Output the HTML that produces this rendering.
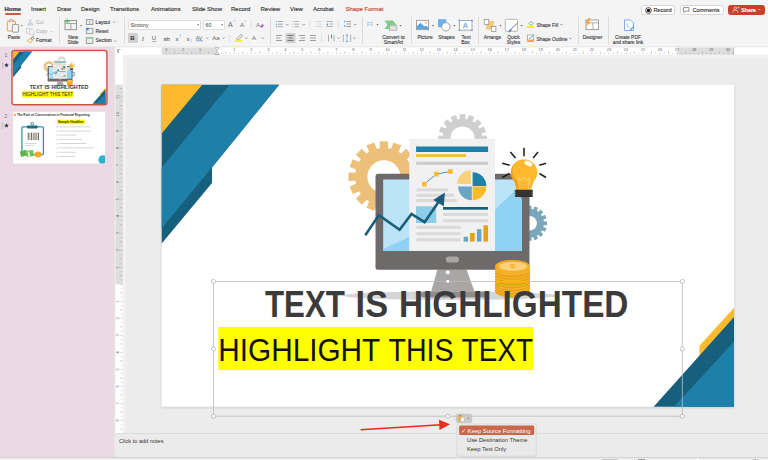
<!DOCTYPE html>
<html><head><meta charset="utf-8">
<style>
*{margin:0;padding:0;box-sizing:border-box}
html,body{width:768px;height:460px;overflow:hidden;background:#ececec;font-family:"Liberation Sans",sans-serif;color:#3a3a3a}
.a{position:absolute;white-space:nowrap}
#ribbon{position:absolute;left:0;top:0;width:768px;height:47px;background:#f4f4f4;border-bottom:1px solid #ebebeb}
.tab{position:absolute;top:5.5px;font-size:6px;color:#333;line-height:7px;-webkit-text-stroke-width:0.15px}
.lbl{position:absolute;width:50px;font-size:4.9px;line-height:5px;color:#3a3a3a;text-align:center;white-space:nowrap;-webkit-text-stroke-width:0.12px}
.sm{position:absolute;font-size:4.9px;line-height:6px;color:#3a3a3a;white-space:nowrap;-webkit-text-stroke-width:0.12px}
.sep{position:absolute;top:17px;width:1px;height:27px;background:#dcdcdc}
#pane{position:absolute;left:0;top:47px;width:114px;height:410px;background:#ebdae5}
#vsep{position:absolute;left:113.7px;top:47px;width:1.8px;height:410px;background:#e6e6e6}
#hruler{position:absolute;left:122px;top:47.5px;width:646px;height:7px;background:#fff}
#vruler{position:absolute;left:115.5px;top:54.5px;width:7px;height:379px;background:#fff}
#corner{position:absolute;left:115.5px;top:47.5px;width:7px;height:7px;background:#fff}
#band1{position:absolute;left:122.5px;top:54.5px;width:646px;height:3.5px;background:#f1f1f1}
#band2{position:absolute;left:122.5px;top:54.5px;width:3.5px;height:379px;background:#f1f1f1}
#notes{position:absolute;left:115.5px;top:433.4px;width:653px;height:23.5px;background:#ebebeb;border-top:1px solid #dcdcdc}
#status{position:absolute;left:0;top:456.5px;width:768px;height:4px;background:#ececec;border-top:1px solid #d2d2d2}
.btn{position:absolute;top:4.5px;height:10px;border:0.6px solid #d6d6d6;border-radius:2.5px;background:#fff;font-size:5.6px;line-height:9px;color:#2a2a2a;-webkit-text-stroke-width:0.12px}
</style></head><body>

<div id="ribbon">
  <div class="tab" style="left:4.5px;font-weight:bold;color:#2a2a2a">Home</div>
  <div class="a" style="left:4.5px;top:13.2px;width:16px;height:1.5px;background:#cc5a48;border-radius:1px"></div>
  <div class="tab" style="left:31px">Insert</div>
  <div class="tab" style="left:57px">Draw</div>
  <div class="tab" style="left:81px">Design</div>
  <div class="tab" style="left:110px">Transitions</div>
  <div class="tab" style="left:151px">Animations</div>
  <div class="tab" style="left:192px">Slide Show</div>
  <div class="tab" style="left:231px">Record</div>
  <div class="tab" style="left:260.5px">Review</div>
  <div class="tab" style="left:290px">View</div>
  <div class="tab" style="left:313px">Acrobat</div>
  <div class="tab" style="left:345.5px;color:#c8442c">Shape Format</div>

  <div class="btn" style="left:640.5px;width:34px"><svg style="position:absolute;left:3px;top:1.5px" width="7" height="7" viewBox="0 0 7 7"><circle cx="3.5" cy="3.5" r="2.9" fill="#fff" stroke="#222" stroke-width="0.8"/><circle cx="3.5" cy="3.5" r="1.7" fill="#111"/></svg><span style="position:absolute;left:12px">Record</span></div>
  <div class="btn" style="left:679.5px;width:44px"><span style="position:absolute;left:12px">Comments</span></div>
  <div class="btn" style="left:728px;width:37px;background:#c8402a;border-color:#c8402a;color:#fff;-webkit-text-stroke:0.2px #fff"><span style="position:absolute;left:12px">Share</span></div>

<svg class="a" style="left:0;top:0" width="768" height="47" viewBox="0 0 768 47">
  <g fill="none" stroke-width="0.8">
    <!-- paste -->
    <rect x="7.3" y="21.2" width="8.2" height="9.8" rx="0.6" stroke="#f2a23a" stroke-width="1"/>
    <path d="M9.3,22 L9.3,20.2 L11.2,19 L13.3,20.2 L13.3,22" stroke="#999"/>
    <rect x="12.4" y="24.4" width="6.2" height="7.8" rx="0.6" fill="#f4f4f4" stroke="#8a8a8a"/>
    <path d="M20.8,25.2 L22.6,25.2 L21.7,26.2 Z" fill="#333" stroke="none"/>
    <!-- cut -->
    <path d="M29,19.5 L31.5,23.5 M31.5,19.5 L29,23.5" stroke="#b5b5b5" stroke-width="0.6"/>
    <circle cx="28.8" cy="24.5" r="1" stroke="#8fb4d9" stroke-width="0.6"/>
    <circle cx="31.7" cy="24.5" r="1" stroke="#8fb4d9" stroke-width="0.6"/>
    <!-- copy -->
    <rect x="26.5" y="28.3" width="3.8" height="5" stroke="#c2c2c2" stroke-width="0.6"/>
    <path d="M29.6,29.6 L32.3,29.6 L34,31.2 L34,34.5 L29.6,34.5 Z" stroke="#c2c2c2" stroke-width="0.6" fill="#f4f4f4"/>
    <path d="M50.5,31 L52.3,31 L51.4,32 Z" fill="#aaa" stroke="none"/>
    <!-- format painter -->
    <path d="M27.2,40.8 L30.2,37.8 L33,40.5 L30,43.6 Z" fill="#f2a23a" stroke="none"/>
    <path d="M28.2,40.8 L30.2,38.8 L31.8,40.4 L29.8,42.5 Z" fill="#fff" stroke="none"/>
    <path d="M31,38.5 L33.8,36 M32.8,39.5 L34.5,37.8" stroke="#555" stroke-width="0.9"/>
    <!-- new slide -->
    <rect x="65" y="20.5" width="11.5" height="9.2" stroke="#8d8d8d" stroke-width="0.9"/>
    <path d="M65.3,23.4 L76.3,23.4 M70.8,23.4 L70.8,29.5" stroke="#8d8d8d" stroke-width="0.8"/>
    <path d="M67.3,18.6 L67.3,24 M64.6,21.4 L70,21.4" stroke="#5cbf6a" stroke-width="0.9"/>
    <path d="M80.2,25.1 L81.9,25.1 L81,26.3 Z" fill="#333" stroke="none"/>
    <!-- layout/reset/section -->
    <rect x="86.3" y="19.6" width="6.6" height="5" stroke="#8d8d8d" stroke-width="0.8" fill="#ececec"/>
    <path d="M89.6,20.5 L89.6,24" stroke="#8d8d8d" stroke-width="0.6"/>
    <rect x="86.3" y="28.3" width="6.6" height="5.4" stroke="#8d8d8d" stroke-width="0.8" fill="#ececec"/>
    <circle cx="87.5" cy="29" r="1.3" fill="#3c8de0" stroke="none"/>
    <rect x="86.3" y="37.5" width="6.6" height="6" stroke="#8d8d8d" stroke-width="0.8" fill="#ececec"/>
    <rect x="86.3" y="37.2" width="6.6" height="1.6" fill="#8fd49a" stroke="none"/>
    <path d="M113.2,21.6 L114.2,22.6 L115.2,21.6 M114.2,40.6 L115.2,41.6 L116.2,40.6" stroke="#444" stroke-width="0.6"/>
    <!-- font box arrows -->
    <path d="M197.2,24.2 L199,24.2 L198.1,25.2 Z M221.2,24.2 L223,24.2 L222.1,25.2 Z" fill="#444" stroke="none"/>
    <!-- grow/shrink -->
    <text x="228" y="27" font-family="Liberation Sans" font-size="7" fill="#666" stroke="none">A</text>
    <path d="M233.2,21.5 L234.3,20.3 L235.4,21.5" stroke="#4a90d9" stroke-width="0.5"/>
    <text x="240" y="27" font-family="Liberation Sans" font-size="6" fill="#666" stroke="none">A</text>
    <path d="M244.5,20.5 L245.5,21.6 L246.5,20.5" stroke="#4a90d9" stroke-width="0.5"/>
    <!-- row2 text formatting -->
    <text x="141.8" y="40.6" font-family="Liberation Serif" font-style="italic" font-size="6.4" fill="#555" stroke="none">I</text>
    <text x="151.8" y="40.2" font-family="Liberation Sans" font-size="6" fill="#555" stroke="none">U</text>
    <path d="M152,41.5 L156.5,41.5" stroke="#555" stroke-width="0.4"/>
    <text x="163.5" y="40.6" font-family="Liberation Sans" font-size="5.8" fill="#666" stroke="none">ab</text>
    <path d="M163.5,38.5 L170,38.5" stroke="#666" stroke-width="0.4"/>
    <text x="175.5" y="40.5" font-family="Liberation Sans" font-size="6" fill="#444" stroke="none">x</text>
    <text x="179.2" y="36.5" font-family="Liberation Sans" font-size="3" fill="#4a90d9" stroke="none">2</text>
    <text x="186.5" y="40.5" font-family="Liberation Sans" font-size="6" fill="#444" stroke="none">x</text>
    <text x="190.2" y="42" font-family="Liberation Sans" font-size="3" fill="#4a90d9" stroke="none">2</text>
    <text x="195.8" y="39.5" font-family="Liberation Sans" font-size="5.2" fill="#666" stroke="none">AV</text>
    <path d="M196,40.8 L203,40.8" stroke="#4a90d9" stroke-width="0.7"/>
    <path d="M206.2,37.6 L207.2,38.6 L208.2,37.6 M222.6,37.6 L223.6,38.6 L224.6,37.6 M245.3,37.6 L246.3,38.6 L247.3,37.6 M261.8,37.6 L262.8,38.6 L263.8,37.6" stroke="#444" stroke-width="0.6"/>
    <text x="212.3" y="40.2" font-family="Liberation Sans" font-size="6" fill="#666" stroke="none">Aa</text>
    <path d="M229.5,34.5 L229.5,42" stroke="#dcdcdc" stroke-width="0.8"/>
    <path d="M236.5,38.8 L241,34.3 L242.5,35.8 L238,40.3 Z" stroke="#666" stroke-width="0.6"/>
    <rect x="235" y="40.3" width="7.5" height="1.4" fill="#f5f000" stroke="none"/>
    <text x="252" y="40.3" font-family="Liberation Sans" font-size="6" fill="#666" stroke="none">A</text>
    <rect x="251.8" y="40.8" width="5.5" height="1" fill="#fff" stroke="none"/>
    <!-- clear formatting -->
    <path d="M251.3,21 L251.3,28" stroke="#dcdcdc" stroke-width="0.8"/>
    <text x="256" y="26.5" font-family="Liberation Sans" font-size="6" fill="#777" stroke="none">A</text>
    <path d="M260,26.5 L262.5,24 L264,25.5 L261.5,28 Z" fill="#c056c9" stroke="none"/>
    <!-- bullets -->
    <g fill="#3c8de0" stroke="none"><circle cx="276.5" cy="21.5" r="0.6"/><circle cx="276.5" cy="24.2" r="0.6"/><circle cx="276.5" cy="26.7" r="0.6"/></g>
    <path d="M278,21.5 L283,21.5 M278,24.2 L283,24.2 M278,26.7 L283,26.7" stroke="#777" stroke-width="0.6"/>
    <path d="M286.3,24.2 L287.3,25.2 L288.3,24.2 M302.6,24.2 L303.6,25.2 L304.6,24.2 M354.2,24.2 L355.2,25.2 L356.2,24.2" stroke="#444" stroke-width="0.6"/>
    <g fill="#9cc6ee" stroke="none"><rect x="292.3" y="21" width="1" height="1"/><rect x="292.3" y="23.7" width="1" height="1"/><rect x="292.3" y="26.2" width="1" height="1"/></g>
    <path d="M294.5,21.5 L299,21.5 M294.5,24.2 L299,24.2 M294.5,26.7 L299,26.7" stroke="#888" stroke-width="0.6"/>
    <path d="M309.5,21 L309.5,28 M338.5,21 L338.5,28 M321.5,34.5 L321.5,42" stroke="#dcdcdc" stroke-width="0.8"/>
    <path d="M315.5,21.5 L321.5,21.5 M318,24 L321.5,24 M315.5,26.5 L321.5,26.5" stroke="#c5c5c5" stroke-width="0.6"/>
    <path d="M326.5,21.5 L333,21.5 M329.5,24 L333,24 M326.5,26.5 L333,26.5" stroke="#888" stroke-width="0.6"/>
    <path d="M326.5,24.5 L328,23 L328,26 Z" fill="#3c8de0" stroke="none"/>
    <path d="M346.5,21.5 L351,21.5 M346.5,24 L351,24 M346.5,26.5 L351,26.5" stroke="#777" stroke-width="0.7"/>
    <path d="M344,22.3 L345.3,21.5 L344,20.8 M344,26.8 L345.3,26 L344,25.3" stroke="#3c8de0" stroke-width="0.7"/>
    <!-- align -->
    <path d="M276,35.5 L282,35.5 M276,38 L280.5,38 M276,40.5 L282,40.5" stroke="#777" stroke-width="0.7"/>
    <rect x="285.5" y="33" width="10" height="10" rx="1.3" fill="#d0d0d0" stroke="none"/>
    <path d="M287.5,35.5 L293.5,35.5 M288.5,38 L292.5,38 M287.5,40.5 L293.5,40.5" stroke="#555" stroke-width="0.7"/>
    <path d="M299,35.5 L305,35.5 M300.5,38 L305,38 M299,40.5 L305,40.5" stroke="#777" stroke-width="0.7"/>
    <path d="M310,35.5 L316,35.5 M310,38 L316,38 M310,40.5 L316,40.5" stroke="#777" stroke-width="0.7"/>
    <path d="M328.5,35 L328.5,41.5 M334,35 L334,41.5" stroke="#aaa" stroke-width="1"/>
    <path d="M331.5,34.5 L331.5,38.5" stroke="#3c8de0" stroke-width="1"/>
    <path d="M337.5,37.6 L338.5,38.6 L339.5,37.6 M353.5,37.6 L354.5,38.6 L355.5,37.6" stroke="#444" stroke-width="0.6"/>
    <path d="M344,35 L343.3,35 L343.3,41.5 L344,41.5 M350,35 L350.7,35 L350.7,41.5 L350,41.5" stroke="#888" stroke-width="0.6"/>
    <path d="M347,35 L347,41.5" stroke="#3c8de0" stroke-width="0.5"/>
    <circle cx="347" cy="35" r="0.8" fill="#3c8de0" stroke="none"/><circle cx="347" cy="41.5" r="0.8" fill="#3c8de0" stroke="none"/>
    <!-- columns -->
    <g fill="#a9cdee" stroke="none"><rect x="367" y="22" width="2.3" height="1.4"/><rect x="370.2" y="22" width="2.3" height="1.4"/><rect x="367" y="24.2" width="2.3" height="1.4"/><rect x="370.2" y="24.2" width="2.3" height="1.4"/></g>
    <path d="M376.5,24.3 L378.5,24.3 L377.5,25.4 Z M399.5,25.3 L401.5,25.3 L400.5,26.4 Z M432,25.3 L434,25.3 L433,26.4 Z M453.5,25.3 L455.5,25.3 L454.5,26.4 Z M499.5,25.3 L501.5,25.3 L500.5,26.4 Z M520.5,25.3 L522.5,25.3 L521.5,26.4 Z" fill="#333" stroke="none"/>
    <!-- smartart -->
    <path d="M384.3,20.5 L393,20.5 L396.5,25 L393,29 L384.3,29 L387.5,25 Z" fill="#7fcc8a" stroke="none"/>
    <rect x="389.3" y="25.2" width="7.6" height="5" fill="#e2e2e2" stroke="#999" stroke-width="0.6"/>
    <!-- picture -->
    <rect x="416.6" y="20.3" width="12" height="9.4" fill="#fff" stroke="#8a8a8a" stroke-width="0.8"/>
    <path d="M417,29.3 L417,26 L420.5,22.8 L424.5,26.5 L426,25.5 L428.3,27.8 L428.3,29.3 Z" fill="#5ba4de" stroke="none"/>
    <circle cx="426" cy="22.8" r="0.9" fill="#f2a23a" stroke="none"/>
    <!-- shapes -->
    <rect x="438" y="19.2" width="8.2" height="8" fill="#6cb1ea" stroke="none"/>
    <circle cx="445.8" cy="26.8" r="4.2" fill="#fff" stroke="#777" stroke-width="0.7"/>
    <!-- text box -->
    <rect x="459.3" y="20.5" width="12.7" height="9.6" fill="#fff" stroke="#8a8a8a" stroke-width="0.7"/>
    <g fill="#4a90d9" stroke="none"><rect x="458.6" y="19.8" width="1.4" height="1.4"/><rect x="471.3" y="19.8" width="1.4" height="1.4"/><rect x="458.6" y="29.4" width="1.4" height="1.4"/><rect x="471.3" y="29.4" width="1.4" height="1.4"/></g>
    <text x="462.8" y="28" font-family="Liberation Sans" font-size="7.5" fill="#4a90d9" stroke="none">A</text>
    <!-- arrange -->
    <rect x="486.2" y="21" width="7.8" height="8.6" fill="#f8c879" stroke="none"/>
    <rect x="484.2" y="19.5" width="4.6" height="4.8" fill="#fff" stroke="#888" stroke-width="0.7"/>
    <rect x="491.3" y="26.4" width="4.6" height="5" fill="#fff" stroke="#888" stroke-width="0.7"/>
    <!-- quick styles -->
    <rect x="505.3" y="19.3" width="12.2" height="12" rx="1.2" fill="#fff" stroke="#999" stroke-width="0.7"/>
    <path d="M509,31 L517.5,23" stroke="#555" stroke-width="0.8"/>
    <path d="M508,32 L510.5,29 L512,30.3 L509.5,32.3 Z" fill="#4a90d9" stroke="none"/>
    <!-- shape fill/outline -->
    <path d="M529,23.5 L531,21.5 L533,23.5 L531,25.5 Z" fill="#fff" stroke="#555" stroke-width="0.6"/>
    <rect x="527" y="26.2" width="7" height="1.8" fill="#f5f000" stroke="none"/>
    <rect x="527.3" y="35" width="6.5" height="5" fill="#fff" stroke="#888" stroke-width="0.6"/>
    <path d="M529,39 L534,35" stroke="#4a90d9" stroke-width="0.9"/>
    <rect x="527" y="40.2" width="7" height="1.8" fill="#f2a23a" stroke="none"/>
    <path d="M560.5,24.2 L561.5,25.2 L562.5,24.2 M569.5,37.8 L570.5,38.8 L571.5,37.8" stroke="#444" stroke-width="0.6"/>
    <!-- designer -->
    <rect x="586" y="20" width="12.5" height="9.6" fill="#fff" stroke="#8a8a8a" stroke-width="0.8"/>
    <path d="M586.5,22.8 L598,22.8 M593,22.8 L593,29.3" stroke="#8a8a8a" stroke-width="0.7"/>
    <path d="M588.5,18 L585.3,23.3 L587.6,23.3 L586,27.5 L590.5,21.8 L588.3,21.8 L590.8,18 Z" fill="#f5a33b" stroke="none"/>
    <!-- create pdf -->
    <path d="M624.5,20 L630.5,20 L633.5,23 L633.5,30.5 L624.5,30.5 Z" fill="#fff" stroke="#5b9be0" stroke-width="0.8"/>
    <path d="M627,23 L627.5,26.5 L630,27.5" stroke="#5b9be0" stroke-width="0.6"/>
    <path d="M630,30 L634,26.5" stroke="#5b9be0" stroke-width="1.2"/>
    <!-- record/comments/share icons -->
    <path d="M683.3,7.6 L689,7.6 L689,11.2 L685.5,11.2 L684,12.5 L684,11.2 L683.3,11.2 Z" stroke="#444" stroke-width="0.6"/>
    <circle cx="735.3" cy="8.2" r="1.3" stroke="#fff" stroke-width="0.6"/><path d="M732.6,12.6 Q732.6,10 735.3,10 Q738,10 738,12.6" stroke="#fff" stroke-width="0.6"/><path d="M737.6,7.6 L739.4,7.6 M738.5,6.7 L738.5,8.5" stroke="#fff" stroke-width="0.5"/>
    <path d="M758.3,9 L759.3,10 L760.3,9" stroke="#fff" stroke-width="0.6"/>
    <!-- font menu right arrows -->
  </g>
</svg>
  <!-- group 1 -->
  <div class="sm" style="left:36px;top:20px;color:#a5a5a5;-webkit-text-stroke:0">Cut</div>
  <div class="sm" style="left:36px;top:29.3px;color:#a5a5a5;-webkit-text-stroke:0">Copy</div>
  <div class="sm" style="left:36px;top:38.2px">Format</div>
  <div class="lbl" style="left:-11.0px;top:34.5px">Paste</div>
  <div class="lbl" style="left:48.2px;top:34.5px">New</div>
  <div class="lbl" style="left:48.0px;top:39.5px">Slide</div>
  <div class="lbl" style="left:368.5px;top:34.5px">Convert to</div>
  <div class="lbl" style="left:368.5px;top:39.5px">SmartArt</div>
  <div class="lbl" style="left:400.0px;top:34.5px">Picture</div>
  <div class="lbl" style="left:421.5px;top:34.5px">Shapes</div>
  <div class="lbl" style="left:441.0px;top:34.5px">Text</div>
  <div class="lbl" style="left:440.5px;top:39.5px">Box</div>
  <div class="lbl" style="left:467.5px;top:34.5px">Arrange</div>
  <div class="lbl" style="left:488.5px;top:34.5px">Quick</div>
  <div class="lbl" style="left:488.5px;top:39.5px">Styles</div>
  <div class="lbl" style="left:567.5px;top:34.5px">Designer</div>
  <div class="lbl" style="left:603.0px;top:34.5px">Create PDF</div>
  <div class="lbl" style="left:603.0px;top:39.5px">and share link</div>
  <div class="sep" style="left:58.5px"></div>
  <div class="sm" style="left:95.5px;top:20.2px">Layout</div>
  <div class="sm" style="left:95.5px;top:29.3px">Reset</div>
  <div class="sm" style="left:95.5px;top:38.2px">Section</div>
  <div class="sep" style="left:124px"></div>
  <div class="a" style="left:127.5px;top:19.5px;width:73.5px;height:10px;background:#fff;border:0.6px solid #dedede;border-radius:1.5px;font-size:5.4px;line-height:9px;padding-left:2px">Sintony</div>
  <div class="a" style="left:202.5px;top:19.5px;width:22.5px;height:10px;background:#fff;border:0.6px solid #dedede;border-radius:1.5px;font-size:5.4px;line-height:9px;padding-left:2px">60</div>
  <div class="a" style="left:127.5px;top:33px;width:10px;height:10px;background:#d0d0d0;border-radius:1.5px;font-size:6px;line-height:10px;text-align:center;font-weight:bold">B</div>
  <svg class="a" style="left:0;top:0" width="768" height="47"><path d="M197.2,24.2 L199.2,24.2 L198.2,25.4 Z M221.2,24.2 L223.2,24.2 L222.2,25.4 Z" fill="#444"/></svg>
  <div class="sep" style="left:270px"></div>
  <div class="sep" style="left:361.5px"></div>
  <div class="sep" style="left:410.5px"></div>
  <div class="sep" style="left:478px"></div>
  <div class="sm" style="left:536.5px;top:22.5px">Shape Fill</div>
  <div class="sm" style="left:536.5px;top:36.5px">Shape Outline</div>
  <div class="sep" style="left:577.5px"></div>
  <div class="sep" style="left:608px"></div>
</div>

<div id="pane"></div>
<div id="vsep"></div>
<svg class="a" style="left:0;top:0" width="768" height="460" viewBox="0 0 768 460">
<rect x="115.5" y="47.5" width="652.5" height="7.3" fill="#fff"/>
<rect x="161.5" y="47.5" width="55.7" height="7.3" fill="#dedede"/>
<rect x="677.3" y="47.5" width="56.4" height="7.3" fill="#dedede"/><rect x="733.5" y="47.5" width="0.6" height="7.3" fill="#999"/>
<path d="M166.11,52.3 L166.11,54 M170.37,52.8 L170.37,54 M174.62,51.3 L174.62,54 M178.88,52.8 L178.88,54 M183.14,52.3 L183.14,54 M187.40,52.8 L187.40,54 M191.65,51.3 L191.65,54 M195.91,52.8 L195.91,54 M200.17,52.3 L200.17,54 M204.43,52.8 L204.43,54 M208.69,51.3 L208.69,54 M212.94,52.8 L212.94,54 M217.20,52.3 L217.20,54 M221.46,52.8 L221.46,54 M225.71,51.3 L225.71,54 M229.97,52.8 L229.97,54 M234.23,52.3 L234.23,54 M238.49,52.8 L238.49,54 M242.75,51.3 L242.75,54 M247.00,52.8 L247.00,54 M251.26,52.3 L251.26,54 M255.52,52.8 L255.52,54 M259.77,51.3 L259.77,54 M264.03,52.8 L264.03,54 M268.29,52.3 L268.29,54 M272.55,52.8 L272.55,54 M276.81,51.3 L276.81,54 M281.06,52.8 L281.06,54 M285.32,52.3 L285.32,54 M289.58,52.8 L289.58,54 M293.83,51.3 L293.83,54 M298.09,52.8 L298.09,54 M302.35,52.3 L302.35,54 M306.61,52.8 L306.61,54 M310.87,51.3 L310.87,54 M315.12,52.8 L315.12,54 M319.38,52.3 L319.38,54 M323.64,52.8 L323.64,54 M327.89,51.3 L327.89,54 M332.15,52.8 L332.15,54 M336.41,52.3 L336.41,54 M340.67,52.8 L340.67,54 M344.93,51.3 L344.93,54 M349.18,52.8 L349.18,54 M353.44,52.3 L353.44,54 M357.70,52.8 L357.70,54 M361.95,51.3 L361.95,54 M366.21,52.8 L366.21,54 M370.47,52.3 L370.47,54 M374.73,52.8 L374.73,54 M378.99,51.3 L378.99,54 M383.24,52.8 L383.24,54 M387.50,52.3 L387.50,54 M391.76,52.8 L391.76,54 M396.01,51.3 L396.01,54 M400.27,52.8 L400.27,54 M404.53,52.3 L404.53,54 M408.79,52.8 L408.79,54 M413.05,51.3 L413.05,54 M417.30,52.8 L417.30,54 M421.56,52.3 L421.56,54 M425.82,52.8 L425.82,54 M430.07,51.3 L430.07,54 M434.33,52.8 L434.33,54 M438.59,52.3 L438.59,54 M442.85,52.8 L442.85,54 M447.11,51.3 L447.11,54 M451.36,52.8 L451.36,54 M455.62,52.3 L455.62,54 M459.88,52.8 L459.88,54 M464.13,51.3 L464.13,54 M468.39,52.8 L468.39,54 M472.65,52.3 L472.65,54 M476.91,52.8 L476.91,54 M481.17,51.3 L481.17,54 M485.42,52.8 L485.42,54 M489.68,52.3 L489.68,54 M493.94,52.8 L493.94,54 M498.19,51.3 L498.19,54 M502.45,52.8 L502.45,54 M506.71,52.3 L506.71,54 M510.97,52.8 L510.97,54 M515.23,51.3 L515.23,54 M519.48,52.8 L519.48,54 M523.74,52.3 L523.74,54 M528.00,52.8 L528.00,54 M532.25,51.3 L532.25,54 M536.51,52.8 L536.51,54 M540.77,52.3 L540.77,54 M545.03,52.8 L545.03,54 M549.29,51.3 L549.29,54 M553.54,52.8 L553.54,54 M557.80,52.3 L557.80,54 M562.06,52.8 L562.06,54 M566.32,51.3 L566.32,54 M570.57,52.8 L570.57,54 M574.83,52.3 L574.83,54 M579.09,52.8 L579.09,54 M583.35,51.3 L583.35,54 M587.60,52.8 L587.60,54 M591.86,52.3 L591.86,54 M596.12,52.8 L596.12,54 M600.38,51.3 L600.38,54 M604.63,52.8 L604.63,54 M608.89,52.3 L608.89,54 M613.15,52.8 L613.15,54 M617.40,51.3 L617.40,54 M621.66,52.8 L621.66,54 M625.92,52.3 L625.92,54 M630.18,52.8 L630.18,54 M634.43,51.3 L634.43,54 M638.69,52.8 L638.69,54 M642.95,52.3 L642.95,54 M647.21,52.8 L647.21,54 M651.47,51.3 L651.47,54 M655.72,52.8 L655.72,54 M659.98,52.3 L659.98,54 M664.24,52.8 L664.24,54 M668.50,51.3 L668.50,54 M672.75,52.8 L672.75,54 M677.01,52.3 L677.01,54 M681.27,52.8 L681.27,54 M685.53,51.3 L685.53,54 M689.78,52.8 L689.78,54 M694.04,52.3 L694.04,54 M698.30,52.8 L698.30,54 M702.56,51.3 L702.56,54 M706.81,52.8 L706.81,54 M711.07,52.3 L711.07,54 M715.33,52.8 L715.33,54 M719.59,51.3 L719.59,54 M723.84,52.8 L723.84,54 M728.10,52.3 L728.10,54 M732.36,52.8 L732.36,54" stroke="#9a9a9a" stroke-width="0.5"/>
<g font-family="Liberation Sans" font-size="3.9" fill="#666"><text x="166.11" y="50.9" text-anchor="middle">3</text><text x="183.14" y="50.9" text-anchor="middle">2</text><text x="200.17" y="50.9" text-anchor="middle">1</text><text x="234.23" y="50.9" text-anchor="middle">1</text><text x="251.26" y="50.9" text-anchor="middle">2</text><text x="268.29" y="50.9" text-anchor="middle">3</text><text x="285.32" y="50.9" text-anchor="middle">4</text><text x="302.35" y="50.9" text-anchor="middle">5</text><text x="319.38" y="50.9" text-anchor="middle">6</text><text x="336.41" y="50.9" text-anchor="middle">7</text><text x="353.44" y="50.9" text-anchor="middle">8</text><text x="370.47" y="50.9" text-anchor="middle">9</text><text x="387.50" y="50.9" text-anchor="middle">10</text><text x="404.53" y="50.9" text-anchor="middle">11</text><text x="421.56" y="50.9" text-anchor="middle">12</text><text x="438.59" y="50.9" text-anchor="middle">13</text><text x="455.62" y="50.9" text-anchor="middle">14</text><text x="472.65" y="50.9" text-anchor="middle">15</text><text x="489.68" y="50.9" text-anchor="middle">16</text><text x="506.71" y="50.9" text-anchor="middle">17</text><text x="523.74" y="50.9" text-anchor="middle">18</text><text x="540.77" y="50.9" text-anchor="middle">19</text><text x="557.80" y="50.9" text-anchor="middle">20</text><text x="574.83" y="50.9" text-anchor="middle">21</text><text x="591.86" y="50.9" text-anchor="middle">22</text><text x="608.89" y="50.9" text-anchor="middle">23</text><text x="625.92" y="50.9" text-anchor="middle">24</text><text x="642.95" y="50.9" text-anchor="middle">25</text><text x="659.98" y="50.9" text-anchor="middle">26</text><text x="677.01" y="50.9" text-anchor="middle">27</text><text x="694.04" y="50.9" text-anchor="middle">28</text><text x="711.07" y="50.9" text-anchor="middle">29</text><text x="728.10" y="50.9" text-anchor="middle">30</text></g>
<path d="M215.2,47.6 L219.2,47.6 L217.2,50.5 Z M215.2,54.5 L219.2,54.5 L217.2,51.7 Z" fill="#fff" stroke="#888" stroke-width="0.5"/>
<rect x="215.2" y="54.8" width="4" height="2" fill="#fff" stroke="#888" stroke-width="0.5"/>
<path d="M117.5,52.5 L117.5,49.5 L120.5,49.5 M118.5,50 L118.5,53" stroke="#666" stroke-width="0.5" fill="none"/>
<rect x="115.5" y="54.8" width="0.1" height="0.1" fill="#fff"/>
<rect x="115.5" y="54.8" width="7.3" height="378.7" fill="#fff"/>
<rect x="115.5" y="84.7" width="7.3" height="199.6" fill="#dedede"/>
<path d="M119.6,88.45 L122.3,88.45 M121.1,92.71 L122.3,92.71 M120.6,96.97 L122.3,96.97 M121.1,101.23 L122.3,101.23 M119.6,105.49 L122.3,105.49 M121.1,109.74 L122.3,109.74 M120.6,114.00 L122.3,114.00 M121.1,118.26 L122.3,118.26 M119.6,122.51 L122.3,122.51 M121.1,126.77 L122.3,126.77 M120.6,131.03 L122.3,131.03 M121.1,135.29 L122.3,135.29 M119.6,139.55 L122.3,139.55 M121.1,143.80 L122.3,143.80 M120.6,148.06 L122.3,148.06 M121.1,152.32 L122.3,152.32 M119.6,156.57 L122.3,156.57 M121.1,160.83 L122.3,160.83 M120.6,165.09 L122.3,165.09 M121.1,169.35 L122.3,169.35 M119.6,173.61 L122.3,173.61 M121.1,177.86 L122.3,177.86 M120.6,182.12 L122.3,182.12 M121.1,186.38 L122.3,186.38 M119.6,190.63 L122.3,190.63 M121.1,194.89 L122.3,194.89 M120.6,199.15 L122.3,199.15 M121.1,203.41 L122.3,203.41 M119.6,207.67 L122.3,207.67 M121.1,211.92 L122.3,211.92 M120.6,216.18 L122.3,216.18 M121.1,220.44 L122.3,220.44 M119.6,224.69 L122.3,224.69 M121.1,228.95 L122.3,228.95 M120.6,233.21 L122.3,233.21 M121.1,237.47 L122.3,237.47 M119.6,241.73 L122.3,241.73 M121.1,245.98 L122.3,245.98 M120.6,250.24 L122.3,250.24 M121.1,254.50 L122.3,254.50 M119.6,258.75 L122.3,258.75 M121.1,263.01 L122.3,263.01 M120.6,267.27 L122.3,267.27 M121.1,271.53 L122.3,271.53 M119.6,275.79 L122.3,275.79 M121.1,280.04 L122.3,280.04 M120.6,284.30 L122.3,284.30 M121.1,288.56 L122.3,288.56 M119.6,292.81 L122.3,292.81 M121.1,297.07 L122.3,297.07 M120.6,301.33 L122.3,301.33 M121.1,305.59 L122.3,305.59 M119.6,309.85 L122.3,309.85 M121.1,314.10 L122.3,314.10 M120.6,318.36 L122.3,318.36 M121.1,322.62 L122.3,322.62 M119.6,326.88 L122.3,326.88 M121.1,331.13 L122.3,331.13 M120.6,335.39 L122.3,335.39 M121.1,339.65 L122.3,339.65 M119.6,343.91 L122.3,343.91 M121.1,348.16 L122.3,348.16 M120.6,352.42 L122.3,352.42 M121.1,356.68 L122.3,356.68 M119.6,360.94 L122.3,360.94 M121.1,365.19 L122.3,365.19 M120.6,369.45 L122.3,369.45 M121.1,373.71 L122.3,373.71 M119.6,377.97 L122.3,377.97 M121.1,382.22 L122.3,382.22 M120.6,386.48 L122.3,386.48 M121.1,390.74 L122.3,390.74 M119.6,395.00 L122.3,395.00 M121.1,399.25 L122.3,399.25 M120.6,403.51 L122.3,403.51 M121.1,407.77 L122.3,407.77 M119.6,412.03 L122.3,412.03 M121.1,416.28 L122.3,416.28 M120.6,420.54 L122.3,420.54 M121.1,424.80 L122.3,424.80 M119.6,429.06 L122.3,429.06" stroke="#9a9a9a" stroke-width="0.5"/>
<g font-family="Liberation Sans" font-size="3.9" fill="#666"><text transform="translate(118.6 96.97) rotate(-90)" text-anchor="middle">11</text><text transform="translate(118.6 114.00) rotate(-90)" text-anchor="middle">10</text><text transform="translate(118.6 131.03) rotate(-90)" text-anchor="middle">9</text><text transform="translate(118.6 148.06) rotate(-90)" text-anchor="middle">8</text><text transform="translate(118.6 165.09) rotate(-90)" text-anchor="middle">7</text><text transform="translate(118.6 182.12) rotate(-90)" text-anchor="middle">6</text><text transform="translate(118.6 199.15) rotate(-90)" text-anchor="middle">5</text><text transform="translate(118.6 216.18) rotate(-90)" text-anchor="middle">4</text><text transform="translate(118.6 233.21) rotate(-90)" text-anchor="middle">3</text><text transform="translate(118.6 250.24) rotate(-90)" text-anchor="middle">2</text><text transform="translate(118.6 267.27) rotate(-90)" text-anchor="middle">1</text><text transform="translate(118.6 301.33) rotate(-90)" text-anchor="middle">1</text><text transform="translate(118.6 318.36) rotate(-90)" text-anchor="middle">2</text><text transform="translate(118.6 335.39) rotate(-90)" text-anchor="middle">3</text><text transform="translate(118.6 352.42) rotate(-90)" text-anchor="middle">4</text><text transform="translate(118.6 369.45) rotate(-90)" text-anchor="middle">5</text><text transform="translate(118.6 386.48) rotate(-90)" text-anchor="middle">6</text><text transform="translate(118.6 403.51) rotate(-90)" text-anchor="middle">7</text><text transform="translate(118.6 420.54) rotate(-90)" text-anchor="middle">8</text></g>
</svg>
<div id="band1"></div>
<div id="band2"></div>
<div id="notes"><div class="a" style="left:3.5px;top:3.6px;font-size:5.6px;color:#333">Click to add notes</div></div>
<div id="status"><div class="a" style="left:602px;top:1px;width:15.7px;height:3px;background:#c4c4c4"></div><div class="a" style="left:638px;top:1.5px;width:7px;height:1px;background:#999"></div><div class="a" style="left:696px;top:1.5px;width:2.5px;height:2.5px;background:#fff;border-radius:50%"></div><div class="a" style="left:753px;top:1.5px;width:5px;height:2px;background:#bbb"></div></div>

<svg class="a" style="left:0;top:0" width="768" height="460" viewBox="0 0 768 460">
  <defs>
    <g id="slide">
      <rect x="0" y="0" width="572.3" height="322" fill="#fff"/>
      <!-- top-left decoration -->
      <polygon points="0,0 117.5,0 50.3,82.7 50.3,98.3 0,158.8" fill="#17607d"/>
      <polygon points="68,0 117.5,0 50.3,82.7 0,143.6 0,83" fill="#1e80a8"/>
      <polygon points="0,0 40.5,0 0,48.7" fill="#fdba2f"/>
      <!-- bottom-right decoration -->
      <polygon points="572.3,223.1 572.3,245 537.8,283 537.8,261" fill="#fdba2f"/>
      <polygon points="572.3,232.3 572.3,322 491.9,322" fill="#17607d"/>
      <polygon points="572.3,257.1 572.3,322 512.3,322" fill="#1e80a8"/>
      
      <g transform="translate(-161.7,-84.7)">
        <g fill="#cfcfcf"><circle cx="462.5" cy="138.5" r="19.8"/><rect x="459.70" y="114.20" width="5.6" height="6.00" transform="rotate(0.00 462.5 138.5)"/><rect x="459.70" y="114.20" width="5.6" height="6.00" transform="rotate(22.50 462.5 138.5)"/><rect x="459.70" y="114.20" width="5.6" height="6.00" transform="rotate(45.00 462.5 138.5)"/><rect x="459.70" y="114.20" width="5.6" height="6.00" transform="rotate(67.50 462.5 138.5)"/><rect x="459.70" y="114.20" width="5.6" height="6.00" transform="rotate(90.00 462.5 138.5)"/><rect x="459.70" y="114.20" width="5.6" height="6.00" transform="rotate(112.50 462.5 138.5)"/><rect x="459.70" y="114.20" width="5.6" height="6.00" transform="rotate(135.00 462.5 138.5)"/><rect x="459.70" y="114.20" width="5.6" height="6.00" transform="rotate(157.50 462.5 138.5)"/><rect x="459.70" y="114.20" width="5.6" height="6.00" transform="rotate(180.00 462.5 138.5)"/><rect x="459.70" y="114.20" width="5.6" height="6.00" transform="rotate(202.50 462.5 138.5)"/><rect x="459.70" y="114.20" width="5.6" height="6.00" transform="rotate(225.00 462.5 138.5)"/><rect x="459.70" y="114.20" width="5.6" height="6.00" transform="rotate(247.50 462.5 138.5)"/><rect x="459.70" y="114.20" width="5.6" height="6.00" transform="rotate(270.00 462.5 138.5)"/><rect x="459.70" y="114.20" width="5.6" height="6.00" transform="rotate(292.50 462.5 138.5)"/><rect x="459.70" y="114.20" width="5.6" height="6.00" transform="rotate(315.00 462.5 138.5)"/><rect x="459.70" y="114.20" width="5.6" height="6.00" transform="rotate(337.50 462.5 138.5)"/></g><circle cx="462.5" cy="138.5" r="12.1" fill="#fff"/>
        <g fill="#edc07a"><circle cx="383.9" cy="176.7" r="28.8"/><rect x="379.75" y="141.30" width="8.3" height="8.10" transform="rotate(0.00 383.9 176.7)"/><rect x="379.75" y="141.30" width="8.3" height="8.10" transform="rotate(22.50 383.9 176.7)"/><rect x="379.75" y="141.30" width="8.3" height="8.10" transform="rotate(45.00 383.9 176.7)"/><rect x="379.75" y="141.30" width="8.3" height="8.10" transform="rotate(67.50 383.9 176.7)"/><rect x="379.75" y="141.30" width="8.3" height="8.10" transform="rotate(90.00 383.9 176.7)"/><rect x="379.75" y="141.30" width="8.3" height="8.10" transform="rotate(112.50 383.9 176.7)"/><rect x="379.75" y="141.30" width="8.3" height="8.10" transform="rotate(135.00 383.9 176.7)"/><rect x="379.75" y="141.30" width="8.3" height="8.10" transform="rotate(157.50 383.9 176.7)"/><rect x="379.75" y="141.30" width="8.3" height="8.10" transform="rotate(180.00 383.9 176.7)"/><rect x="379.75" y="141.30" width="8.3" height="8.10" transform="rotate(202.50 383.9 176.7)"/><rect x="379.75" y="141.30" width="8.3" height="8.10" transform="rotate(225.00 383.9 176.7)"/><rect x="379.75" y="141.30" width="8.3" height="8.10" transform="rotate(247.50 383.9 176.7)"/><rect x="379.75" y="141.30" width="8.3" height="8.10" transform="rotate(270.00 383.9 176.7)"/><rect x="379.75" y="141.30" width="8.3" height="8.10" transform="rotate(292.50 383.9 176.7)"/><rect x="379.75" y="141.30" width="8.3" height="8.10" transform="rotate(315.00 383.9 176.7)"/><rect x="379.75" y="141.30" width="8.3" height="8.10" transform="rotate(337.50 383.9 176.7)"/></g><circle cx="383.9" cy="176.7" r="16.5" fill="#fff"/>
        <g fill="#7ba6bc"><circle cx="529.6" cy="223.3" r="14.3"/><rect x="527.70" y="205.80" width="3.8" height="4.70" transform="rotate(0.00 529.6 223.3)"/><rect x="527.70" y="205.80" width="3.8" height="4.70" transform="rotate(22.50 529.6 223.3)"/><rect x="527.70" y="205.80" width="3.8" height="4.70" transform="rotate(45.00 529.6 223.3)"/><rect x="527.70" y="205.80" width="3.8" height="4.70" transform="rotate(67.50 529.6 223.3)"/><rect x="527.70" y="205.80" width="3.8" height="4.70" transform="rotate(90.00 529.6 223.3)"/><rect x="527.70" y="205.80" width="3.8" height="4.70" transform="rotate(112.50 529.6 223.3)"/><rect x="527.70" y="205.80" width="3.8" height="4.70" transform="rotate(135.00 529.6 223.3)"/><rect x="527.70" y="205.80" width="3.8" height="4.70" transform="rotate(157.50 529.6 223.3)"/><rect x="527.70" y="205.80" width="3.8" height="4.70" transform="rotate(180.00 529.6 223.3)"/><rect x="527.70" y="205.80" width="3.8" height="4.70" transform="rotate(202.50 529.6 223.3)"/><rect x="527.70" y="205.80" width="3.8" height="4.70" transform="rotate(225.00 529.6 223.3)"/><rect x="527.70" y="205.80" width="3.8" height="4.70" transform="rotate(247.50 529.6 223.3)"/><rect x="527.70" y="205.80" width="3.8" height="4.70" transform="rotate(270.00 529.6 223.3)"/><rect x="527.70" y="205.80" width="3.8" height="4.70" transform="rotate(292.50 529.6 223.3)"/><rect x="527.70" y="205.80" width="3.8" height="4.70" transform="rotate(315.00 529.6 223.3)"/><rect x="527.70" y="205.80" width="3.8" height="4.70" transform="rotate(337.50 529.6 223.3)"/></g><circle cx="529.6" cy="223.3" r="7.3" fill="#fff"/>
        <ellipse cx="450.5" cy="295.6" rx="107" ry="4.3" fill="#d6d6d6"/>
        <rect x="421" y="291.5" width="67" height="6" rx="3" fill="#8f8c8c"/>
        <polygon points="437.4,269.5 466.5,269.5 474.7,292 431,292" fill="#a9a6a6"/>
        <rect x="375.5" y="173.7" width="154" height="96" rx="2.5" fill="#6e6a6a"/>
        <rect x="383.2" y="179.5" width="138.6" height="71.5" fill="#bce4f9"/>
        <polygon points="383.2,251 383.2,249 409.5,237 409.5,251" fill="#8ed3f3"/>
        <polygon points="494.5,210 521.8,184 521.8,251 494.5,251" fill="#8ed3f3"/>
        <rect x="445.8" y="256.4" width="13.2" height="6.2" rx="3.1" fill="#a8a5a5"/>
        <rect x="409.3" y="138.8" width="85.7" height="112" fill="#f1f1f1"/>
        <rect x="416.1" y="146.5" width="72" height="5.5" fill="#1f80a8"/>
        <rect x="416.1" y="154.2" width="50" height="2.7" fill="#fdba2f"/>
        <rect x="416.1" y="161.8" width="72" height="3" fill="#cbcbcb"/>
        <polyline points="424.3,184.2 436.3,174.1 450.4,171.5" fill="none" stroke="#1f80a8" stroke-width="0.8"/>
        <rect x="422" y="181.9" width="4.6" height="4.6" fill="#fdba2f"/>
        <rect x="434" y="171.8" width="4.6" height="4.6" fill="#fdba2f"/>
        <rect x="448.1" y="169.2" width="4.6" height="4.6" fill="#fdba2f"/>
        <path d="M470.9,184 L457.2,184 A13.7,13.7 0 0 1 470.9,170.3 Z" fill="#f8d17d"/>
        <path d="M472.6,186 L472.6,172.3 A13.7,13.7 0 0 1 486.3,186 Z" fill="#1f80a8"/>
        <path d="M472.6,186.6 L486.3,186.6 A13.7,13.7 0 0 1 472.6,200.3 Z" fill="#fdba2f"/>
        <path d="M471.8,186.6 L471.8,200.3 A13.7,13.7 0 0 1 458.1,186.6 Z" fill="#6ba5c5"/>
        <g fill="#d9d9d9">
          <rect x="416.4" y="188.3" width="31.5" height="3"/>
          <rect x="416.4" y="193.8" width="37.6" height="3"/>
          <rect x="416.4" y="199" width="40.4" height="3"/>
          <rect x="443" y="212.9" width="45" height="3"/>
          <rect x="443" y="219.3" width="45" height="3"/>
          <rect x="416.4" y="225.8" width="44.2" height="3"/>
          <rect x="416.4" y="232.2" width="44.2" height="3"/>
          <rect x="416.4" y="238.3" width="44.2" height="3"/>
        </g>
        <rect x="416" y="206.3" width="20.2" height="16.7" fill="#8ecdea"/>
        <rect x="443" y="207" width="45" height="2.7" fill="#1b5e7b"/>
        <rect x="463.6" y="236.8" width="4.6" height="4.8" fill="#6ba5c5"/>
        <rect x="470" y="233" width="4.7" height="8.6" fill="#e8a11d"/>
        <rect x="476.9" y="229.2" width="4.5" height="12.4" fill="#6ba5c5"/>
        <rect x="483.4" y="225.3" width="4.6" height="16.3" fill="#e8a11d"/>
        <polyline points="365.3,235.2 378.9,215.1 399.6,229.8 411.5,214 424.6,222.2 439.5,200.5" fill="none" stroke="#1b5e7b" stroke-width="2.6" stroke-linejoin="miter"/>
        <polygon points="444.9,192.6 433.2,199.9 443.8,206.3" fill="#1b5e7b"/>
        <g stroke="#222" stroke-width="1.55" stroke-linecap="butt">
          <line x1="524" y1="147.8" x2="524" y2="156.3"/>
          <line x1="510.4" y1="152" x2="515.5" y2="158"/>
          <line x1="538" y1="152" x2="533.1" y2="158"/>
          <line x1="502.2" y1="163.2" x2="509.7" y2="165.2"/>
          <line x1="546.1" y1="163.2" x2="539.3" y2="165.2"/>
          <line x1="502.2" y1="177.5" x2="509.5" y2="173.5"/>
          <line x1="546" y1="177.5" x2="539.5" y2="173.5"/>
        </g>
        <path d="M514.5,181.5 A13.2,13.2 0 1 1 533.7,181.5 L530.9,189.9 L516.7,189.9 Z" fill="#fdb92d"/>
        <path d="M514.5,181.5 A13.2,13.2 0 0 1 514.6,163.3 A14,14 0 0 0 519.3,182.5 L520.3,189.9 L516.7,189.9 Z" fill="#f0a21f"/>
        <ellipse cx="528.5" cy="163.5" rx="4.2" ry="2.5" transform="rotate(25 528.5 163.5)" fill="#fff" opacity="0.9"/>
        <path d="M519.6,189.5 L518.4,177.8 L521.3,180.3 L524,177.3 L526.8,180.3 L529.7,177.8 L528.5,189.5" fill="none" stroke="#fcd98a" stroke-width="0.8"/>
        <rect x="514.8" y="189.7" width="18.1" height="7.4" rx="0.8" fill="#333"/>
        <g stroke="#f4f4f4" stroke-width="0.5"><line x1="514.5" y1="192.2" x2="516" y2="192.2"/><line x1="531.6" y1="192.2" x2="533.1" y2="192.2"/><line x1="514.5" y1="194.7" x2="516" y2="194.7"/><line x1="531.6" y1="194.7" x2="533.1" y2="194.7"/></g>
        <rect x="521" y="197.1" width="5" height="1.2" fill="#6e6a6a"/>
        <path d="M495.2,266 L495.2,291.4 A17.3,6 0 0 0 529.8,291.4 L529.8,266 Z" fill="#f5b027"/>
        <path d="M495.2,270.5 A17.3,6 0 0 0 529.8,270.5" fill="none" stroke="#dc9514" stroke-width="0.8"/><path d="M495.2,273.3 A17.3,6 0 0 0 529.8,273.3" fill="none" stroke="#dc9514" stroke-width="0.8"/><path d="M495.2,276.1 A17.3,6 0 0 0 529.8,276.1" fill="none" stroke="#dc9514" stroke-width="0.8"/><path d="M495.2,278.9 A17.3,6 0 0 0 529.8,278.9" fill="none" stroke="#dc9514" stroke-width="0.8"/><path d="M495.2,281.7 A17.3,6 0 0 0 529.8,281.7" fill="none" stroke="#dc9514" stroke-width="0.8"/><path d="M495.2,284.5 A17.3,6 0 0 0 529.8,284.5" fill="none" stroke="#dc9514" stroke-width="0.8"/><path d="M495.2,287.3 A17.3,6 0 0 0 529.8,287.3" fill="none" stroke="#dc9514" stroke-width="0.8"/><path d="M495.2,290.1 A17.3,6 0 0 0 529.8,290.1" fill="none" stroke="#dc9514" stroke-width="0.8"/>
        <ellipse cx="512.5" cy="266" rx="17.3" ry="6" fill="#f5ae22"/>
        <ellipse cx="513" cy="266.4" rx="14" ry="4.4" fill="#fcd27a"/>
        <text x="512.5" y="269" font-family="Liberation Sans" font-weight="bold" font-size="8" fill="#f5b027" text-anchor="middle" transform="translate(512.5 266) scale(1.4 0.6) translate(-512.5 -266)">$</text>
      </g>

      <!-- title text -->
      <g transform="translate(-161.7,-84.7)">
        <rect x="218.3" y="327" width="314.9" height="43.1" fill="#ffff00"/>
        <text transform="matrix(0.3122 0 0 0.3700 265.00 316.80)" font-family="Liberation Sans" font-weight="bold" font-size="100" fill="#3b3b3b">TEXT</text>
        <text transform="matrix(0.3434 0 0 0.3700 355.60 316.80)" font-family="Liberation Sans" font-weight="bold" font-size="100" fill="#3b3b3b">IS</text>
        <text transform="matrix(0.3332 0 0 0.3700 399.00 316.80)" font-family="Liberation Sans" font-weight="bold" font-size="100" fill="#3b3b3b">HIGHLIGHTED</text>
        <text transform="matrix(0.2978 0 0 0.3186 218.20 360.70)" font-family="Liberation Sans" font-weight="normal" font-size="100" fill="#111">HIGHLIGHT</text>
        <text transform="matrix(0.2855 0 0 0.3186 388.50 360.70)" font-family="Liberation Sans" font-weight="normal" font-size="100" fill="#111">THIS</text>
        <text transform="matrix(0.2797 0 0 0.3186 461.60 360.70)" font-family="Liberation Sans" font-weight="normal" font-size="100" fill="#111">TEXT</text>
      </g>
    </g>
  </defs>
  <!-- slide shadow -->
  <filter id="sh" x="-5%" y="-5%" width="110%" height="110%"><feGaussianBlur stdDeviation="1.6"/></filter><rect x="161.7" y="85.7" width="572.3" height="322" fill="#000" opacity="0.13" filter="url(#sh)"/>
  <use href="#slide" transform="translate(161.7,84.7)"/>
  <!-- thumbnail 1 -->
  <rect x="12" y="50.5" width="94.9" height="54.2" rx="2.5" fill="#fff" stroke="#c65440" stroke-width="1.4"/>
  <g transform="translate(13.1,51.6) scale(0.1616)"><use href="#slide"/></g>
  <!-- thumbnail 2 -->
  <rect x="13.2" y="111.7" width="91.9" height="51.7" rx="1.5" fill="#fff"/>


  <!-- pane items -->
  <g font-family="Liberation Sans" fill="#777">
    <text x="4.5" y="56.9" font-size="5.3">1</text>
    <text x="4.3" y="117.5" font-size="5.3">2</text>
  </g>
  <polygon points="6.50,62.80 7.13,64.33 8.78,64.46 7.53,65.53 7.91,67.14 6.50,66.28 5.09,67.14 5.47,65.53 4.22,64.46 5.87,64.33" fill="#333"/>
  <polygon points="6.50,123.20 7.13,124.73 8.78,124.86 7.53,125.93 7.91,127.54 6.50,126.68 5.09,127.54 5.47,125.93 4.22,124.86 5.87,124.73" fill="#333"/>
  <path d="M1.8,63.2 L3.4,63.2 M1.8,65.4 L3.4,65.4 M1.8,67.6 L3.4,67.6 M1.8,123.6 L3.4,123.6 M1.8,125.8 L3.4,125.8 M1.8,128 L3.4,128" stroke="#777" stroke-width="0.5"/>
  <!-- thumbnail 2 contents -->
  <clipPath id="t2clip"><rect x="13.2" y="111.7" width="91.9" height="51.9" rx="1.5"/></clipPath>
  <g clip-path="url(#t2clip)">
    <circle cx="14.8" cy="114.9" r="1.2" fill="#f5a623"/>
    <text x="16.9" y="115.8" font-family="Liberation Sans" font-weight="bold" font-size="3" fill="#333" textLength="72.8" lengthAdjust="spacingAndGlyphs">The Role of Conservatism in Financial Reporting</text>
    <rect x="56.9" y="119.6" width="27.8" height="4.6" fill="#ffff00"/>
    <text x="58" y="123.1" font-family="Liberation Sans" font-weight="bold" font-size="3.2" fill="#222" textLength="25.5" lengthAdjust="spacingAndGlyphs">Sample Headline</text>
    <path d="M56.3,126.9 L57.2,127.6 L58.2,126.1" stroke="#999" stroke-width="0.35" fill="none"/><rect x="59.3" y="126.4" width="31.2" height="0.9" fill="#d2d2d2"/><path d="M56.3,131.2 L57.2,131.9 L58.2,130.4" stroke="#999" stroke-width="0.35" fill="none"/><rect x="59.3" y="130.6" width="31.7" height="0.9" fill="#d2d2d2"/><path d="M56.3,135.2 L57.2,135.9 L58.2,134.4" stroke="#999" stroke-width="0.35" fill="none"/><rect x="59.3" y="134.6" width="16.7" height="0.9" fill="#d2d2d2"/><path d="M56.3,139.3 L57.2,140.0 L58.2,138.5" stroke="#999" stroke-width="0.35" fill="none"/><rect x="59.3" y="138.8" width="22.7" height="0.9" fill="#d2d2d2"/><path d="M56.3,143.7 L57.2,144.4 L58.2,142.9" stroke="#999" stroke-width="0.35" fill="none"/><rect x="59.3" y="143.1" width="26.7" height="0.9" fill="#d2d2d2"/><path d="M56.3,148.0 L57.2,148.7 L58.2,147.2" stroke="#999" stroke-width="0.35" fill="none"/><rect x="59.3" y="147.4" width="33.7" height="0.9" fill="#d2d2d2"/><path d="M56.3,152.3 L57.2,153.0 L58.2,151.5" stroke="#999" stroke-width="0.35" fill="none"/><rect x="59.3" y="151.8" width="16.7" height="0.9" fill="#d2d2d2"/><path d="M56.3,156.5 L57.2,157.2 L58.2,155.7" stroke="#999" stroke-width="0.35" fill="none"/><rect x="59.3" y="155.9" width="15.7" height="0.9" fill="#d2d2d2"/>
    <rect x="21.9" y="126.9" width="21.5" height="27.7" rx="1" fill="#fff" stroke="#3393a8" stroke-width="1.3"/>
    <rect x="27" y="125.6" width="10.7" height="2.8" rx="0.8" fill="#1e6b80"/>
    <circle cx="32.3" cy="123.8" r="1.3" fill="none" stroke="#1e6b80" stroke-width="0.8"/>
    <g fill="#666"><rect x="27.8" y="132.6" width="1" height="7.5"/><rect x="29.6" y="132.6" width="0.6" height="7.5"/><rect x="31" y="132.6" width="1.2" height="7.5"/><rect x="33" y="132.6" width="0.6" height="7.5"/><rect x="34.5" y="132.6" width="1" height="7.5"/><rect x="36.3" y="132.6" width="0.6" height="7.5"/><rect x="37.8" y="132.6" width="1.2" height="7.5"/></g>
    <path d="M27.5,140 L39.8,132" stroke="#f5c14a" stroke-width="0.5"/>
    <rect x="25" y="143" width="12" height="0.8" fill="#ccc"/><rect x="25" y="145" width="9" height="0.8" fill="#ccc"/>
    <path d="M20,151.5 L26,149.8 L27,155.5 L21,157 Z" fill="#5bb548"/>
    <path d="M26,150.8 L33,150 L34,156 L27,157 Z" fill="#6cc257"/>
    <rect x="28" y="151.5" width="1.8" height="5" fill="#e8f5e0" transform="rotate(-10 29 154)"/>
    <ellipse cx="38" cy="154.5" rx="3.5" ry="3" fill="#f5a623"/>
    <circle cx="103" cy="159.8" r="4.6" fill="#2db5cf"/>
  </g>
  <!-- selection box -->
  <rect x="213.4" y="281.4" width="468.9" height="134.8" fill="none" stroke="#bdbdbd" stroke-width="0.8"/>
  <g fill="#fff" stroke="#9a9a9a" stroke-width="0.6">
    <circle cx="213.4" cy="281.4" r="2"/><circle cx="682.3" cy="281.4" r="2"/><rect x="446" y="279.8" width="3.4" height="3.2"/><line x1="447.7" y1="274.8" x2="447.7" y2="279.8"/><circle cx="447.8" cy="272.4" r="2.3"/>
    <circle cx="213.4" cy="348.8" r="2"/><circle cx="682.3" cy="348.8" r="2"/>
    <circle cx="213.4" cy="416.2" r="2"/><circle cx="447.8" cy="416.2" r="2"/><circle cx="682.3" cy="416.2" r="2"/>
  </g>
  <!-- red arrow -->
  <line x1="360.6" y1="429.7" x2="441" y2="424.8" stroke="#f0281e" stroke-width="1.6"/>
  <polygon points="439,419.8 450,424.3 439.5,430" fill="#f0281e"/>
  <!-- paste button -->
  <rect x="456.1" y="414.1" width="15.6" height="8.5" rx="1.5" fill="#c9c9c9" stroke="#b5b5b5" stroke-width="0.5"/>
  <rect x="458" y="415.6" width="4.6" height="5.8" rx="0.4" fill="#f2b148"/>
  <rect x="459.3" y="415" width="2" height="1.2" fill="#8a8a8a"/>
  <rect x="460.6" y="417.2" width="3.8" height="4.6" fill="#f4f4f4" stroke="#999" stroke-width="0.3"/>
  <path d="M467.6,417.8 L469.2,417.8 L468.4,418.8 Z" fill="#444"/>
  <!-- menu -->
  <rect x="456.3" y="424" width="80.4" height="33" rx="3" fill="#000" opacity="0.06"/>
  <rect x="456.8" y="423.8" width="79.4" height="32.2" rx="2.5" fill="#e9e9e9" stroke="#d6d6d6" stroke-width="0.5"/>
  <rect x="459.1" y="425.6" width="75.1" height="9.4" rx="1.5" fill="#c9674a"/>
  <text x="461" y="432.6" font-family="Liberation Sans" font-size="5.8" fill="#fff">✓ Keep Source Formatting</text>
  <text x="467" y="442" font-family="Liberation Sans" font-size="5.8" fill="#333">Use Destination Theme</text>
  <text x="467" y="451.4" font-family="Liberation Sans" font-size="5.8" fill="#333">Keep Text Only</text>
</svg>
</body></html>
